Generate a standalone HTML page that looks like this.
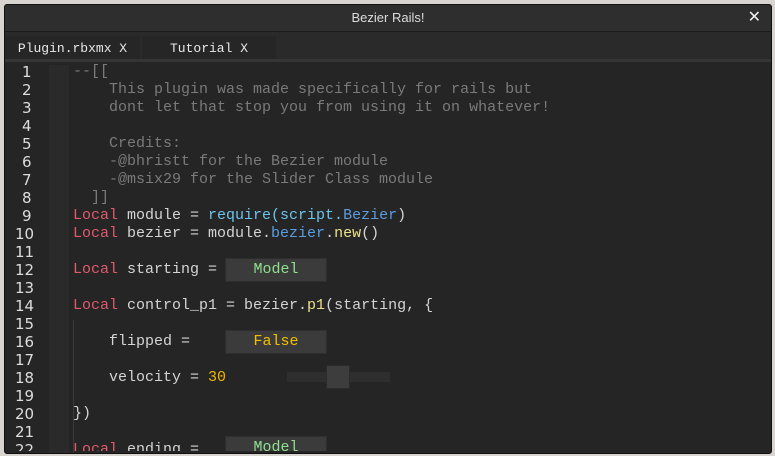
<!DOCTYPE html>
<html><head><style>
body{margin:0;width:775px;height:456px;background:#d8d4cf;overflow:hidden;position:relative;font-family:"Liberation Mono",monospace}
.win{position:absolute;left:4px;top:4px;width:766px;height:448px;background:#252525;border:1px solid #111;border-radius:3px;overflow:hidden}
.title{position:absolute;left:0;top:0;width:766px;height:26px;background:#2e2e2e;border-bottom:1px solid #1c1c1c;color:#ddd;font:13px "Liberation Sans",sans-serif;text-align:center;line-height:26px}
.x{position:absolute;right:10px;top:0;color:#eee;font:16px "Liberation Sans",sans-serif;line-height:26px}
.tabs{position:absolute;left:0;top:27px;width:766px;height:27px;background:#2a2a2a;border-bottom:3px solid #353535}
.tab{position:absolute;top:4px;height:23px;background:#262626;color:#e8e8e8;font-size:13px;line-height:25px;text-align:center}
.strip{position:absolute;left:44px;top:60px;width:20px;height:400px;background:#2a2a2a}
.clip{position:absolute;left:0;top:0;width:770px;height:451px;overflow:hidden}
.l{position:absolute;left:0;height:18px;line-height:18px;font-size:15px;white-space:pre;color:#d4d4d4}
.n{position:absolute;left:15px;width:30px;font:15px "DejaVu Sans",sans-serif;line-height:18px;color:#ddd}
.c{color:#7a7a7a}.k{color:#e05a6c}.cy{color:#6cc4ea}.b{color:#5a9de0}.y{color:#ece08c}.o{color:#f0b400}
.box{position:absolute;width:100px;height:22px;background:#3b3b3b;border:1px solid #2e2e2e;text-align:center;font-size:15px;line-height:22px}
</style></head><body>
<div class="win">
<div class="title">Bezier Rails!<span class="x">✕</span></div>
<div class="tabs">
<div class="tab" style="left:0;width:135px">Plugin.rbxmx X</div>
<div class="tab" style="left:137px;width:134px">Tutorial X</div>
</div>
<div class="strip"></div>
<div style="position:absolute;left:68px;top:315px;width:1px;height:137px;background:#3a3a3a"></div>
</div>
<div class="clip">
<div id="code"></div>
<div class="box" style="left:225px;top:258px;color:#8fe08f">Model</div>
<div class="box" style="left:225px;top:330px;color:#f0c000">False</div>
<div class="box" style="left:225px;top:436px;color:#8fe08f">Model</div>
<div style="position:absolute;left:287px;top:372px;width:103px;height:10px;background:#2e2e2e"></div>
<div style="position:absolute;left:326px;top:365px;width:22px;height:22px;background:#3d3d3d;border:1px solid #2b2b2b"></div>
</div>
<script>
var L=[
'<span class="c">--[[</span>',
'<span class="c">    This plugin was made specifically for rails but</span>',
'<span class="c">    dont let that stop you from using it on whatever!</span>',
'',
'<span class="c">    Credits:</span>',
'<span class="c">    -@bhristt for the Bezier module</span>',
'<span class="c">    -@msix29 for the Slider Class module</span>',
'<span class="c">  ]]</span>',
'<span class="k">Local</span> module = <span class="cy">require(script.</span><span class="b">Bezier</span>)',
'<span class="k">Local</span> bezier = module.<span class="b">bezier</span>.<span class="y">new</span>()',
'',
'<span class="k">Local</span> starting =',
'',
'<span class="k">Local</span> control_p1 = bezier.<span class="y">p1</span>(starting, {',
'',
'    flipped =',
'',
'    velocity = <span class="o">30</span>',
'',
'})',
'',
'<span class="k">Local</span> ending ='];
var h='';
for(var i=0;i<L.length;i++){var t=63+18*i;
h+='<div class="n" style="top:'+t+'px;left:'+(i<9?22:15)+'px">'+(i+1)+'</div><div class="l" style="left:73px;top:'+t+'px">'+L[i]+'</div>';}
document.getElementById('code').innerHTML=h;
</script>
</body></html>
